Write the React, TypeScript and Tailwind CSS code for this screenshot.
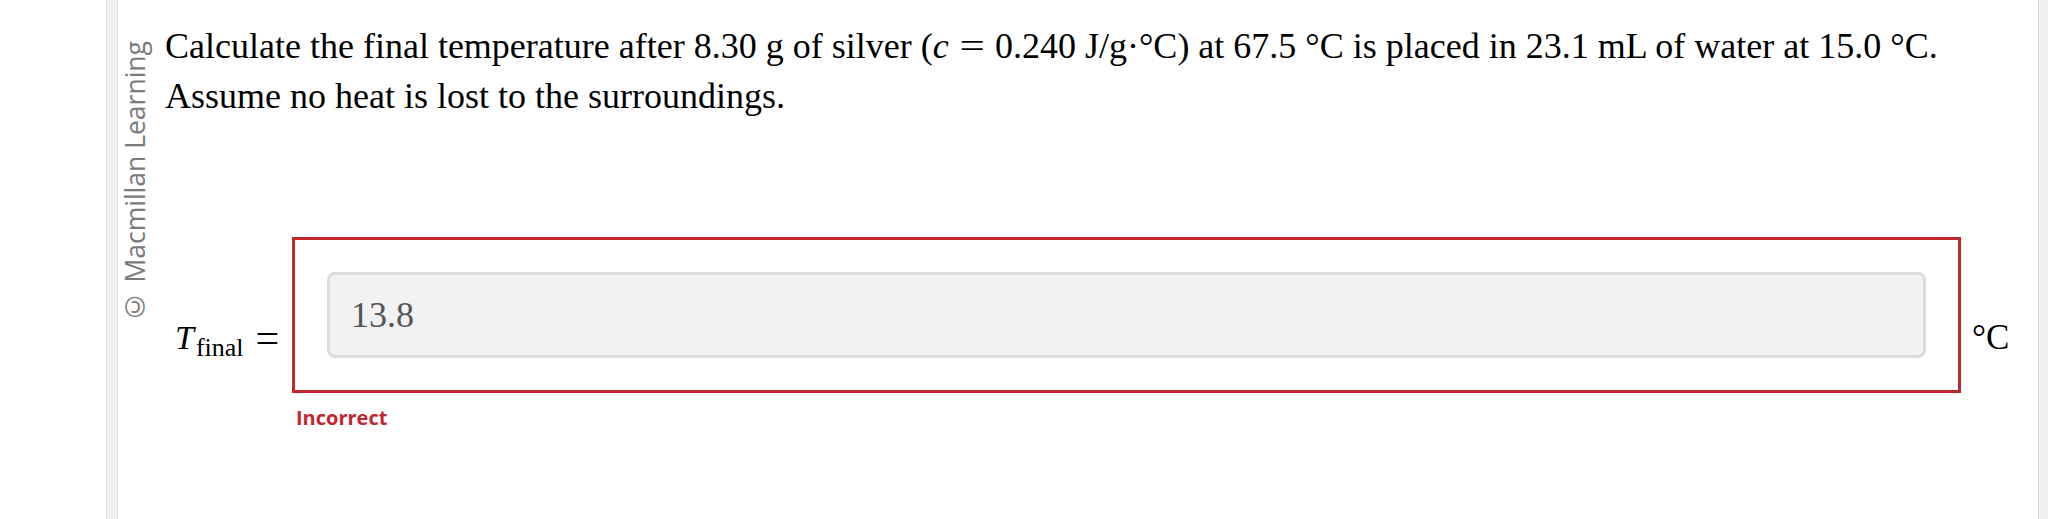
import React from "react";

export default function App() {
  return (
    <div className="flex h-[519px] w-[2048px] overflow-hidden bg-white">
      <div className="w-[106px] shrink-0" />
      <div className="w-[12px] shrink-0 border-x border-[#dcdcdc] bg-[#efefef]" />
      <div className="flex w-[47px] shrink-0 flex-col pt-[46px]">
        <div className="flex h-[274px] items-center pl-[4px]">
          <span className="rotate-180 whitespace-nowrap font-['Open_Sans',sans-serif] text-[26.5px] leading-none text-[#7a7a7a] [writing-mode:vertical-rl]">
            © Macmillan Learning
          </span>
        </div>
      </div>
      <div className="flex min-w-0 flex-1 flex-col pt-[21px]">
        <p className="whitespace-nowrap font-['Liberation_Serif',serif] text-[36px] leading-[50px] text-black">
          Calculate the final temperature after 8.30 g of silver (<i>c</i>{" "}
          <span className="mx-[4px] inline-block scale-x-[1.25]">=</span>{" "}0.240 J/g·°C) at 67.5 °C is placed in 23.1 mL of
          water at 15.0 °C.
          <br />
          Assume no heat is lost to the surroundings.
        </p>
        <div className="mt-[116px] flex items-start">
          <div className="mt-[80px] w-[127px] shrink-0 pl-[10px] font-['Liberation_Serif',serif] leading-none text-black">
            <i className="text-[34px]">T</i>
            <span className="ml-[2px] align-[-7px] text-[26px]">final</span>
            <span className="ml-[12px] align-[-3px] text-[42px]">=</span>
          </div>
          <div className="flex flex-1 flex-col">
            <div className="border-[3px] border-[#c1272d] p-[32px]">
              <div className="flex h-[86px] items-center rounded-[8px] border-[3px] border-[#dcdcdc] bg-[#f2f2f2] pl-[21px] font-['Liberation_Serif',serif] text-[36px] text-[#555]">
                13.8
              </div>
            </div>
            <div className="mt-[15px] pl-[4px] font-['Open_Sans',sans-serif] text-[20px] font-bold leading-none text-[#c1272d]">
              Incorrect
            </div>
          </div>
          <div className="mt-[83px] w-[77px] shrink-0 pl-[11px] font-['Liberation_Serif',serif] text-[35px] leading-none text-black">
            °C
          </div>
        </div>
      </div>
      <div className="w-[10px] shrink-0 border-l border-[#dcdcdc] bg-[#efefef]" />
    </div>
  );
}
